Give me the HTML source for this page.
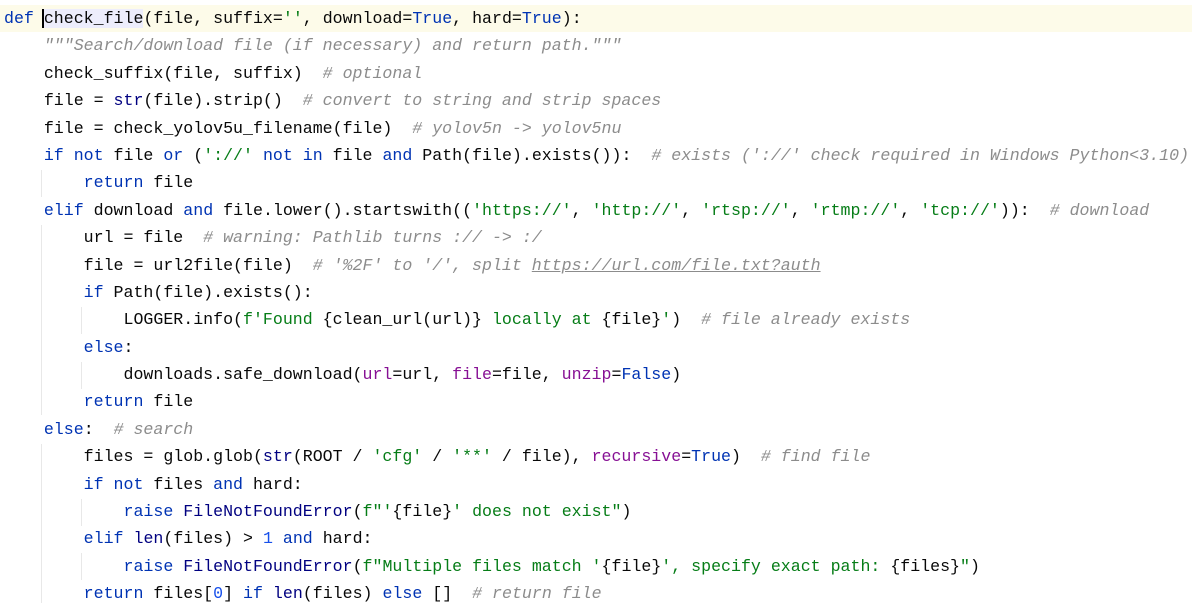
<!DOCTYPE html>
<html><head><meta charset="utf-8"><style>
html,body{margin:0;padding:0;background:#fff;width:1192px;height:603px;overflow:hidden}
.code{position:absolute;left:4px;top:5px;font-family:"Liberation Mono","DejaVu Sans Mono",monospace;font-size:16.6px;line-height:27.4px;color:#080808}
.l{height:27.4px;white-space:pre}
.hl{background:#fdfbe9;margin-left:-4px;padding-left:4px;width:1192px}
.k{color:#0033b3}.s{color:#067d17}.c{color:#8c8c8c;font-style:italic}.b{color:#000080}.p{color:#871094}.n{color:#1750eb}
.fn{background:#ededfc}
.u{text-decoration:underline}
.cur{border-left:2px solid #000;margin-left:-2px}
.g{position:absolute;width:1px;background:#e8e8e8}
</style></head><body>
<div class="g" style="left:41px;top:170px;height:27px"></div>
<div class="g" style="left:41px;top:225px;height:190px"></div>
<div class="g" style="left:81px;top:307px;height:27px"></div>
<div class="g" style="left:81px;top:362px;height:27px"></div>
<div class="g" style="left:41px;top:444px;height:159px"></div>
<div class="g" style="left:81px;top:499px;height:27px"></div>
<div class="g" style="left:81px;top:553px;height:27px"></div>
<div class="code"><div class="l hl"><span class="k">def</span> <span class="fn cur">check_file</span>(file, suffix=<span class="s">''</span>, download=<span class="k">True</span>, hard=<span class="k">True</span>):</div><div class="l">    <span class="c">"""Search/download file (if necessary) and return path."""</span></div><div class="l">    check_suffix(file, suffix)  <span class="c"># optional</span></div><div class="l">    file = <span class="b">str</span>(file).strip()  <span class="c"># convert to string and strip spaces</span></div><div class="l">    file = check_yolov5u_filename(file)  <span class="c"># yolov5n -&gt; yolov5nu</span></div><div class="l">    <span class="k">if not</span> file <span class="k">or</span> (<span class="s">'://'</span> <span class="k">not in</span> file <span class="k">and</span> Path(file).exists()):  <span class="c"># exists ('://' check required in Windows Python&lt;3.10)</span></div><div class="l">        <span class="k">return</span> file</div><div class="l">    <span class="k">elif</span> download <span class="k">and</span> file.lower().startswith((<span class="s">'https://'</span>, <span class="s">'http://'</span>, <span class="s">'rtsp://'</span>, <span class="s">'rtmp://'</span>, <span class="s">'tcp://'</span>)):  <span class="c"># download</span></div><div class="l">        url = file  <span class="c"># warning: Pathlib turns :// -&gt; :/</span></div><div class="l">        file = url2file(file)  <span class="c"># '%2F' to '/', split <span class="u">https://url.com/file.txt?auth</span></span></div><div class="l">        <span class="k">if</span> Path(file).exists():</div><div class="l">            LOGGER.info(<span class="s">f'Found </span>{clean_url(url)}<span class="s"> locally at </span>{file}<span class="s">'</span>)  <span class="c"># file already exists</span></div><div class="l">        <span class="k">else</span>:</div><div class="l">            downloads.safe_download(<span class="p">url</span>=url, <span class="p">file</span>=file, <span class="p">unzip</span>=<span class="k">False</span>)</div><div class="l">        <span class="k">return</span> file</div><div class="l">    <span class="k">else</span>:  <span class="c"># search</span></div><div class="l">        files = glob.glob(<span class="b">str</span>(ROOT / <span class="s">'cfg'</span> / <span class="s">'**'</span> / file), <span class="p">recursive</span>=<span class="k">True</span>)  <span class="c"># find file</span></div><div class="l">        <span class="k">if not</span> files <span class="k">and</span> hard:</div><div class="l">            <span class="k">raise</span> <span class="b">FileNotFoundError</span>(<span class="s">f"'</span>{file}<span class="s">' does not exist"</span>)</div><div class="l">        <span class="k">elif</span> <span class="b">len</span>(files) &gt; <span class="n">1</span> <span class="k">and</span> hard:</div><div class="l">            <span class="k">raise</span> <span class="b">FileNotFoundError</span>(<span class="s">f"Multiple files match '</span>{file}<span class="s">', specify exact path: </span>{files}<span class="s">"</span>)</div><div class="l">        <span class="k">return</span> files[<span class="n">0</span>] <span class="k">if</span> <span class="b">len</span>(files) <span class="k">else</span> []  <span class="c"># return file</span></div></div>
</body></html>
